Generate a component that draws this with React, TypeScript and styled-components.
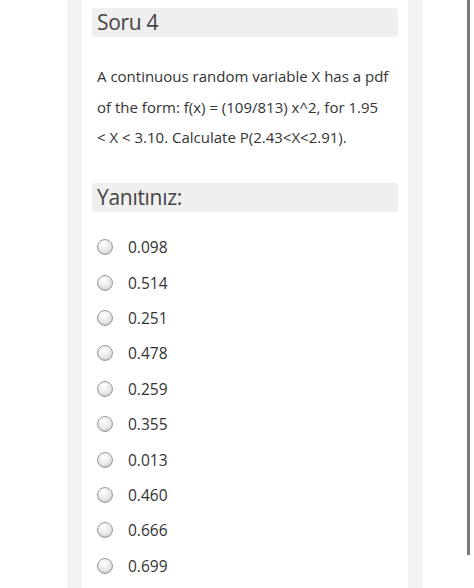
import styled, { createGlobalStyle } from "styled-components";

const options = ["0.098", "0.514", "0.251", "0.478", "0.259", "0.355", "0.013", "0.460", "0.666", "0.699"];

const GlobalStyle = createGlobalStyle`
  html, body {
    margin: 0;
    padding: 0;
    background: #ffffff;
  }
  body {
    font-family: "Open Sans", "Noto Sans", sans-serif;
    color: #333333;
  }
`;

const Page = styled.div`
  display: flex;
  align-items: flex-start;
  width: 474px;
  height: 588px;
  overflow: hidden;
`;

const Frame = styled.div`
  margin-left: 67px;
  width: 356px;
  height: 588px;
  padding: 0 15px;
  box-sizing: border-box;
  background: #f3f3f3;
  display: flex;
`;

const Panel = styled.div`
  flex: 1;
  background: #ffffff;
  padding: 8px 10px 0;
  display: flex;
  flex-direction: column;
`;

const EdgeLine = styled.div`
  margin-left: 44px;
  width: 3px;
  height: 555px;
  background: #7a7a7a;
`;

const Heading = styled.div<{ $top?: number }>`
  margin-top: ${(p) => p.$top ?? 0}px;
  height: 29px;
  background: #efefef;
  border-radius: 3px;
  padding-left: 5px;
  font-size: 21px;
  letter-spacing: -0.3px;
  line-height: 29px;
  color: #444444;
`;

const Question = styled.p`
  margin: 24px 0 0;
  padding: 0 9px 0 5px;
  font-size: 15px;
  line-height: 30.5px;
  color: #333333;
`;

const OptionList = styled.div`
  margin-top: 18px;
  display: flex;
  flex-direction: column;
`;

const Option = styled.label`
  display: flex;
  align-items: center;
  height: 35.4px;
  padding-left: 5px;
  gap: 15px;
  font-size: 15.5px;
  color: #333333;
`;

const Radio = styled.span`
  width: 16px;
  height: 16px;
  flex-shrink: 0;
  border-radius: 50%;
  box-sizing: border-box;
  border: 1px solid #9a9a9a;
  background: radial-gradient(circle at 40% 30%, #ffffff 0%, #eeeeee 40%, #cfcfcf 100%);
  box-shadow: inset 0 -1px 1px rgba(0, 0, 0, 0.1);
`;

export default function App() {
  return (
    <>
      <GlobalStyle />
      <Page>
        <Frame>
          <Panel>
            <Heading>Soru 4</Heading>
            <Question>
              A continuous random variable X has a pdf of the form: f(x) = (109/813) x^2, for 1.95
              &lt; X &lt; 3.10. Calculate P(2.43&lt;X&lt;2.91).
            </Question>
            <Heading $top={30}>Yanıtınız:</Heading>
            <OptionList>
              {options.map((o) => (
                <Option key={o}>
                  <Radio />
                  {o}
                </Option>
              ))}
            </OptionList>
          </Panel>
        </Frame>
        <EdgeLine />
      </Page>
    </>
  );
}
